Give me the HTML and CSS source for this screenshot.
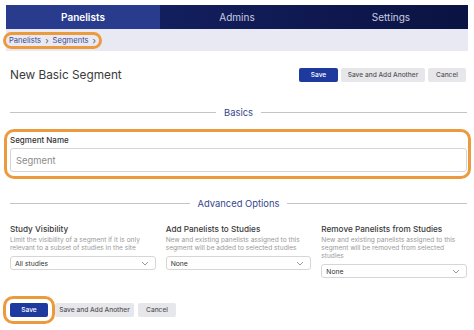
FILE: index.html
```html
<!DOCTYPE html>
<html lang="en">

<head>
    <meta charset="UTF-8">
    <title>New Basic Segment</title>
    <link rel="stylesheet" href="styles.css">
</head>

<body>
    <nav class="tabs">
        <a class="tab active">Panelists</a>
        <a class="tab">Admins</a>
        <a class="tab">Settings</a>
    </nav>
    <div class="crumbbar">
        <span class="crumbs ring">
            <span>Panelists</span>
            <span class="sep">›</span>
            <span>Segments</span>
            <span class="sep">›</span>
        </span>
    </div>

    <main class="content">
        <div class="titlerow">
            <h1>New Basic Segment</h1>
            <div class="actions">
                <button class="btn primary">Save</button>
                <button class="btn another">Save and Add Another</button>
                <button class="btn cancel">Cancel</button>
            </div>
        </div>

        <div class="divider"><span>Basics</span></div>

        <div class="field ring">
            <label for="name">Segment Name</label>
            <input id="name" type="text" placeholder="Segment">
        </div>

        <div class="divider adv"><span>Advanced Options</span></div>

        <div class="options">
            <div class="option">
                <h3>Study Visibility</h3>
                <p>Limit the visibility of a segment if it is only relevant to a subset of studies in the site</p>
                <div class="select">All studies
                    <svg width="8" height="5" viewBox="0 0 8 5"><polyline points="1,1 4,4 7,1" fill="none" stroke="#9a9a9a" stroke-width="1"/></svg>
                </div>
            </div>
            <div class="option">
                <h3>Add Panelists to Studies</h3>
                <p>New and existing panelists assigned to this segment will be added to selected studies</p>
                <div class="select">None
                    <svg width="8" height="5" viewBox="0 0 8 5"><polyline points="1,1 4,4 7,1" fill="none" stroke="#9a9a9a" stroke-width="1"/></svg>
                </div>
            </div>
            <div class="option">
                <h3>Remove Panelists from Studies</h3>
                <p>New and existing panelists assigned to this segment will be removed from selected studies</p>
                <div class="select">None
                    <svg width="8" height="5" viewBox="0 0 8 5"><polyline points="1,1 4,4 7,1" fill="none" stroke="#9a9a9a" stroke-width="1"/></svg>
                </div>
            </div>
        </div>

        <div class="bottomrow">
            <span class="savering ring"><button class="btn primary">Save</button></span>
            <button class="btn wide">Save and Add Another</button>
            <button class="btn cancel">Cancel</button>
        </div>
    </main>
</body>

</html>
```

FILE: styles.css
```css
body {
    margin: 0;
    font-family: Inter, "Liberation Sans", sans-serif;
    background: #ffffff;
    color: #333;
}

/* barre de navigation */
.tabs {
    display: grid;
    grid-template-columns: repeat(3, 1fr);
    height: 24px;
    margin: 5px 6px 0;
    background: linear-gradient(to right, #17246c, #0b1342);
}

.tab {
    display: flex;
    align-items: center;
    justify-content: center;
    font-size: 10px;
    color: #c9cde2;
}

.tab.active {
    background: #293b8c;
    color: #ffffff;
    font-weight: 600;
}

.crumbbar {
    display: flex;
    align-items: center;
    height: 22px;
    margin: 0 6px;
    background: #e9e9f3;
}

.ring {
    border: 3px solid #ec9a3e;
    border-radius: 10px;
}

.crumbs {
    display: flex;
    align-items: center;
    gap: 4px;
    height: 11px;
    margin-left: -3px;
    padding: 0 3px 0 3px;
    font-size: 7.6px;
    color: #3b4a8c;
}

.crumbs .sep {
    font-size: 9px;
    color: #555;
}

.content {
    padding: 0 7px 0 10px;
}

.titlerow {
    display: flex;
    align-items: center;
    justify-content: space-between;
    height: 14px;
    margin-top: 17px;
}

h1 {
    margin: 0;
    font-size: 11.8px;
    font-weight: 400;
    color: #3a3a3a;
}

.actions {
    display: flex;
    gap: 3px;
    margin-right: 1px;
}

.btn {
    height: 14px;
    padding: 0;
    border: none;
    border-radius: 2px;
    background: #e7e7eb;
    color: #555;
    font-family: inherit;
    font-size: 6.6px;
    font-weight: 500;
    white-space: nowrap;
}

.btn.primary {
    width: 39px;
    background: #1f3a9f;
    color: #ffffff;
}

.btn.another {
    width: 84px;
}

.btn.cancel {
    width: 38px;
}

.divider {
    display: flex;
    align-items: center;
    gap: 8px;
    height: 14px;
    margin-top: 23px;
    font-size: 9.4px;
    color: #34468c;
}

.divider::before,
.divider::after {
    content: "";
    flex: 1;
    height: 1px;
    background: #c4c4c4;
}

.divider.adv {
    margin-top: 17px;
}

.field {
    display: flex;
    flex-direction: column;
    gap: 2px;
    margin: 10px -4px 0 -6px;
    padding: 3px 1px 4px 3px;
}

.field label {
    height: 11px;
    line-height: 11px;
    font-size: 8px;
    font-weight: 500;
    color: #333;
}

.field input {
    box-sizing: border-box;
    height: 24px;
    padding: 0 5px;
    border: 1px solid #d6d6d6;
    border-radius: 3px;
    font-family: inherit;
    font-size: 9.4px;
}

.field input::placeholder {
    color: #8a8a8a;
}

.options {
    display: grid;
    grid-template-columns: repeat(3, 1fr);
    gap: 10px;
    margin-top: 13px;
    align-items: start;
}

.option h3 {
    margin: 0;
    height: 13px;
    line-height: 12px;
    font-size: 8.2px;
    font-weight: 500;
    color: #3a3a3a;
}

.option p {
    margin: 0;
    font-size: 6.6px;
    line-height: 8px;
    color: #9a9a9a;
}

.select {
    box-sizing: border-box;
    display: flex;
    align-items: center;
    justify-content: space-between;
    height: 14px;
    margin-top: 4px;
    padding: 0 6px 0 4px;
    border: 1px solid #d6d6d6;
    border-radius: 3px;
    font-size: 6.8px;
    color: #333;
}

.bottomrow {
    display: flex;
    align-items: center;
    margin: 18px 0 0 -7px;
}

.savering {
    display: flex;
    padding: 4px;
}

.savering .btn.primary {
    width: 38px;
}

.btn.wide {
    width: 79px;
    margin-right: 4px;
}
```
